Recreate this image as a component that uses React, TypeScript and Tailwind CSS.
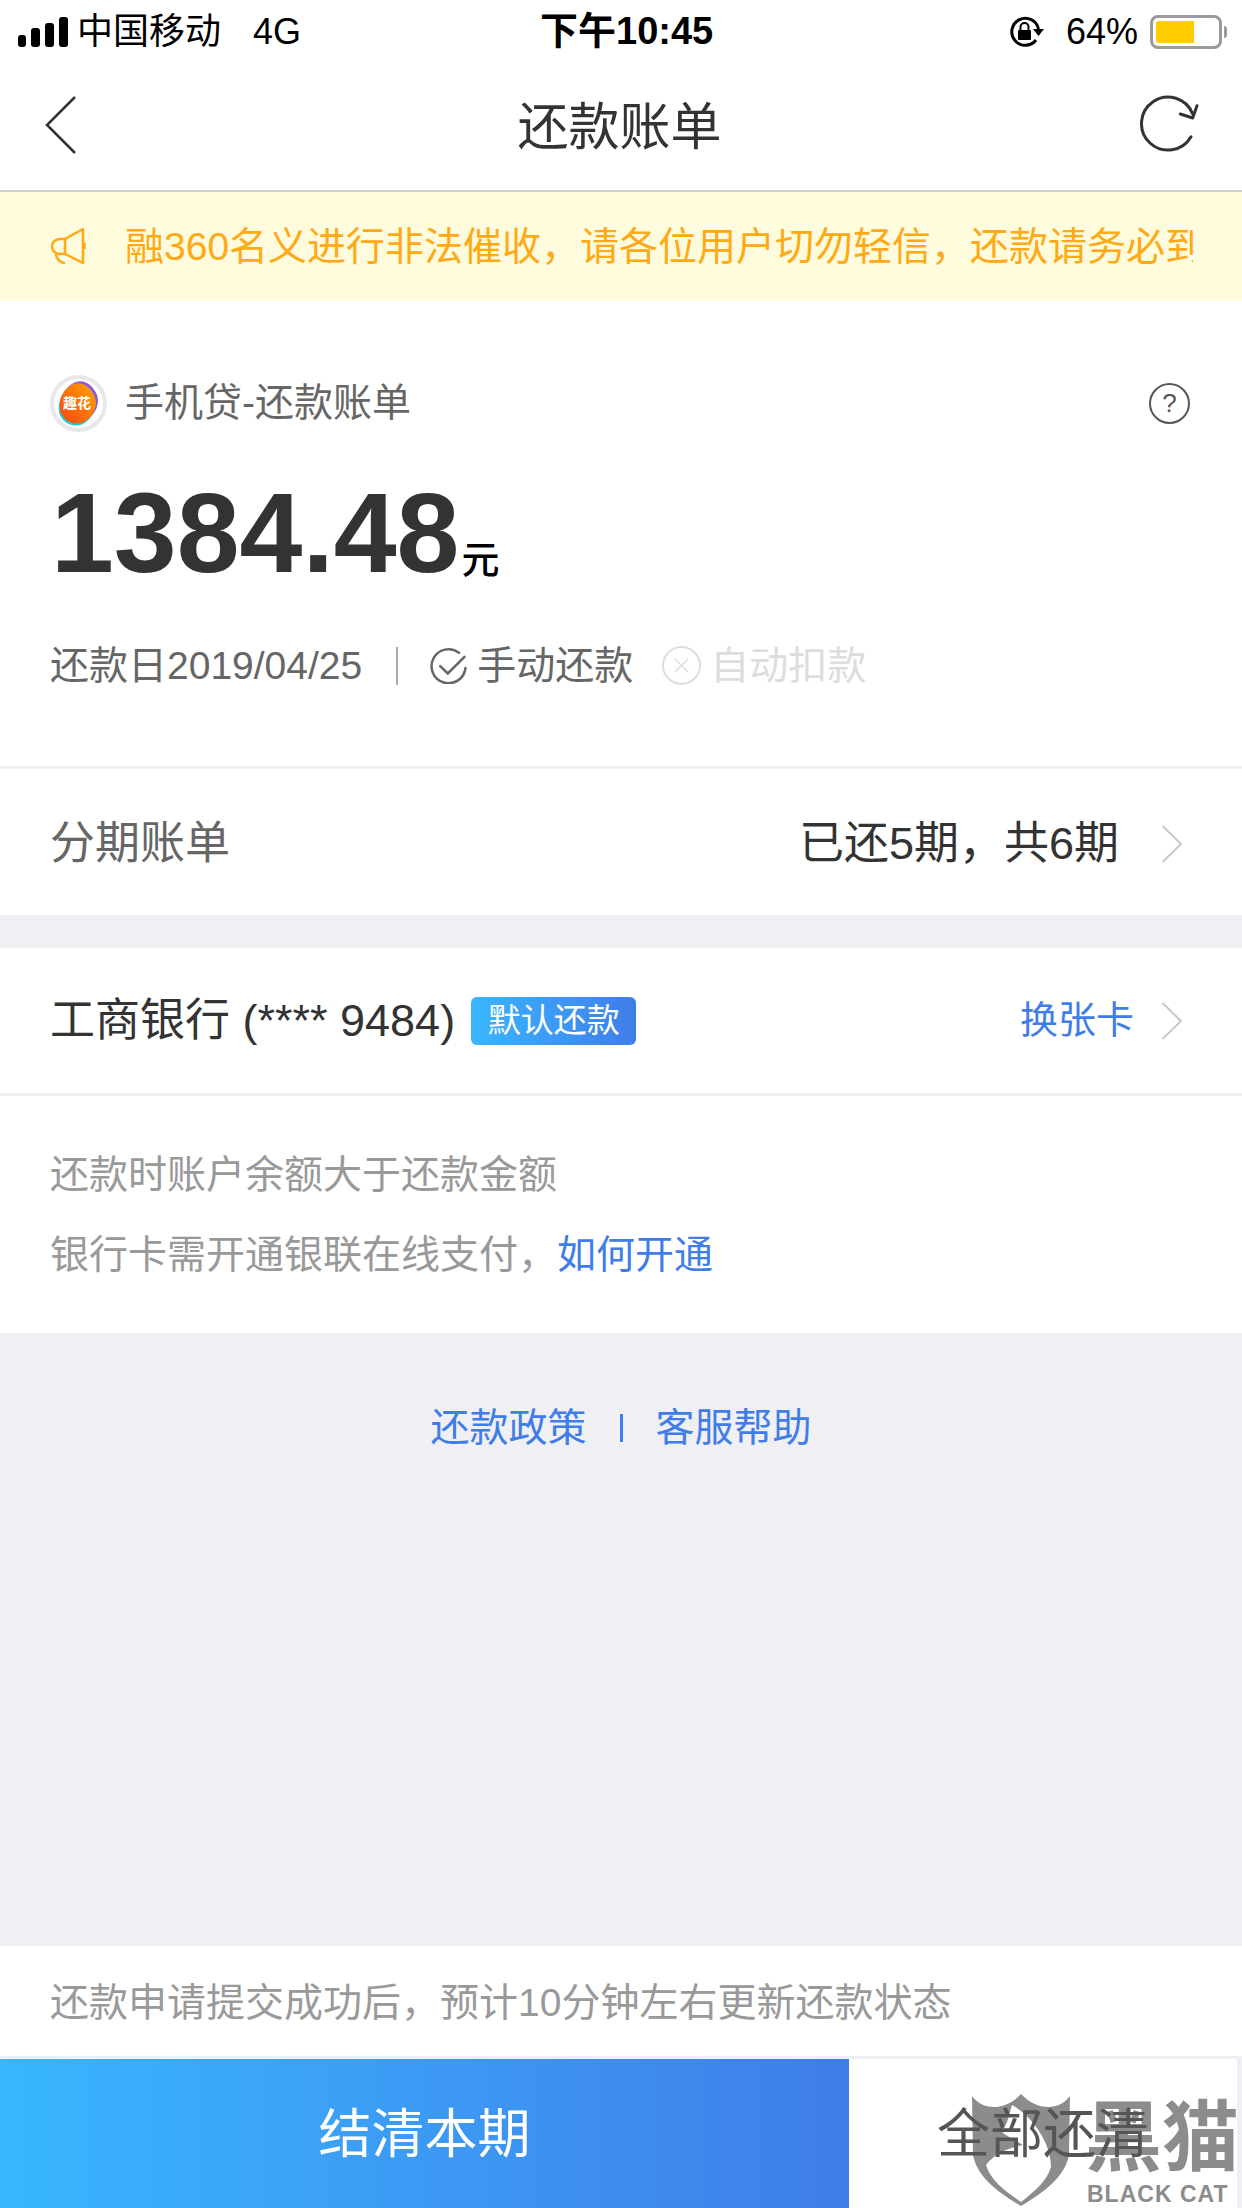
import React from "react";

function Chevron() {
  return (
    <svg width="22" height="38" viewBox="0 0 22 38" fill="none" className="shrink-0">
      <path d="M1.5 1 L20 19 L1.5 37" stroke="#c8c8c8" strokeWidth="2" />
    </svg>
  );
}

function StatusBar() {
  return (
    <div className="flex h-[60px] shrink-0 items-center pt-[3px] text-[36px] text-black">
      <div className="ml-[18px] flex h-[30px] items-end gap-[5px]">
        <div className="h-[12px] w-[8px] rounded-[3px] bg-black" />
        <div className="h-[19px] w-[9px] rounded-[3px] bg-black" />
        <div className="h-[24px] w-[9px] rounded-[3px] bg-black" />
        <div className="h-[30px] w-[9px] rounded-[3px] bg-black" />
      </div>
      <span className="ml-[9px]">中国移动</span>
      <span className="ml-[32px]">4G</span>
      <span className="ml-[239px] text-[38px] font-semibold">下午10:45</span>
      <svg width="36" height="32" viewBox="0 0 36 32" fill="none" className="ml-auto">
        <path d="M27 24 A13.5 13.5 0 1 1 29.5 13" stroke="#000" strokeWidth="3" />
        <path d="M24 13 L35 13 L29.5 20 Z" fill="#000" />
        <rect x="9" y="14" width="13" height="10" rx="1" fill="#000" />
        <path d="M11.5 14 V11 A4 4 0 0 1 19.5 11 V14" stroke="#000" strokeWidth="2" />
      </svg>
      <span className="ml-[21px]">64%</span>
      <div className="ml-[12px] mr-[15px] flex items-center">
        <div className="flex h-[34px] w-[72px] items-center rounded-[8px] border-[3px] border-[#9b9b9b] p-[3px]">
          <div className="h-[22px] w-[38px] rounded-l-[3px] bg-[#ffcc00]" />
        </div>
        <div className="ml-[2px] h-[12px] w-[3px] rounded-r-[3px] bg-[#9b9b9b]" />
      </div>
    </div>
  );
}

function NavBar() {
  return (
    <div className="flex h-[132px] shrink-0 items-center justify-between border-b-2 border-[#d0d0d0] pl-[45px] pr-[44px]">
      <div className="w-[58px]">
        <svg width="32" height="60" viewBox="0 0 32 60" fill="none">
          <path d="M30 2 L2 30 L30 58" stroke="#333" strokeWidth="2.5" />
        </svg>
      </div>
      <span className="pt-[6px] text-[51px] text-[#333]">还款账单</span>
      <svg width="66" height="62" viewBox="0 0 66 62" fill="none" className="-mr-[4px]">
        <path d="M55 42.7 A26.5 26.5 0 1 1 56.7 20" stroke="#333" strokeWidth="3" strokeLinecap="round" />
        <path d="M61 11.7 L56.7 24 L44.3 20" stroke="#333" strokeWidth="3" strokeLinecap="round" strokeLinejoin="round" />
      </svg>
    </div>
  );
}

function Notice() {
  return (
    <div className="flex h-[109px] shrink-0 items-center bg-[#fffbdd] pl-[51px] pr-[49px] text-[39px] text-[#ffa914]">
      <svg width="37" height="37" viewBox="11 12 37 37" fill="none" className="shrink-0">
        <path d="M25 23 L43 13 V47 L25 38 Z" stroke="#ffa914" strokeWidth="2.5" strokeLinejoin="round" />
        <path d="M25 23 H20 A8 7.5 0 0 0 20 38 H25" stroke="#ffa914" strokeWidth="2.5" />
        <path d="M16 39 C17 44 20 46 24 47" stroke="#ffa914" strokeWidth="2.5" strokeLinecap="round" />
        <path d="M44.5 27 V33" stroke="#ffa914" strokeWidth="2.5" />
      </svg>
      <div className="ml-[37px] overflow-hidden whitespace-nowrap pt-[2px]">
        融360名义进行非法催收，请各位用户切勿轻信，还款请务必到
      </div>
    </div>
  );
}

function Logo() {
  return (
    <div className="relative h-[57px] w-[57px] shrink-0 rounded-full border-[4px] border-[#e8e8ea]">
      <svg width="49" height="49" viewBox="4 4 49 49" className="absolute left-0 top-0">
        <defs>
          <linearGradient id="qh" x1="1" y1="0" x2="0" y2="1">
            <stop offset="0" stopColor="#ffa800" />
            <stop offset="1" stopColor="#f9420e" />
          </linearGradient>
        </defs>
        <path d="M24 9 C32 6 41 12 45 22 C48 30 44 42 34 47 C26 51 16 47 12 40 C7 32 10 14 24 9 Z" fill="#8457ee" transform="translate(2,-2)" />
        <path d="M24 9 C32 6 41 12 45 22 C48 30 44 42 34 47 C26 51 16 47 12 40 C7 32 10 14 24 9 Z" fill="#22cdd8" transform="translate(-1,2)" />
        <path d="M24 9 C32 6 41 12 45 22 C48 30 44 42 34 47 C26 51 16 47 12 40 C7 32 10 14 24 9 Z" fill="url(#qh)" />
      </svg>
      <span className="absolute left-[9px] top-[16px] text-[14px] font-bold leading-[16px] whitespace-nowrap text-white">
        趣花
      </span>
    </div>
  );
}

function BillCard() {
  return (
    <div className="h-[465px] shrink-0 pl-[50px] pr-[52px] pt-[73px]">
      <div className="flex items-center">
        <Logo />
        <span className="ml-[18px] text-[39px] text-[#666]">手机贷-还款账单</span>
        <div className="ml-auto flex h-[41px] w-[41px] items-center justify-center rounded-full border-2 border-[#555] text-[26px] text-[#555]">
          ?
        </div>
      </div>
      <div className="mt-[42px] flex h-[116px] items-end pl-[1px]">
        <span className="text-[113px] font-bold leading-[116px] text-[#333]">1384.48</span>
        <span className="mb-[12px] ml-[2px] text-[38px] font-medium leading-[38px] text-black">元</span>
      </div>
      <div className="mt-[46px] flex items-center text-[39px] text-[#666]">
        <span>还款日2019/04/25</span>
        <div className="ml-[34px] h-[38px] w-[2px] bg-[#aaa]" />
        <svg width="37" height="37" viewBox="0 0 37 37" fill="none" className="ml-[32px]">
          <path d="M29 5.8 A17 17 0 1 0 35.5 21" stroke="#666" strokeWidth="2.5" strokeLinecap="round" />
          <path d="M10.2 19.2 L17.8 26.5 L34.5 9.8" stroke="#666" strokeWidth="2.5" strokeLinecap="round" />
        </svg>
        <span className="ml-[10px]">手动还款</span>
        <div className="ml-[29px] flex h-[39px] w-[39px] items-center justify-center rounded-full border-2 border-[#ddd]">
          <svg width="15" height="15" viewBox="0 0 15 15" fill="none">
            <path d="M1 1 L14 14 M14 1 L1 14" stroke="#ddd" strokeWidth="1.5" />
          </svg>
        </div>
        <span className="ml-[9px] text-[#ddd]">自动扣款</span>
      </div>
    </div>
  );
}

export default function App() {
  return (
    <div className="flex h-[2208px] w-[1242px] flex-col overflow-hidden bg-[#efeff4] [font-family:'Liberation_Sans','Noto_Sans_CJK_SC',sans-serif]">
      <div className="bg-white">
        <StatusBar />
        <NavBar />
      </div>
      <Notice />
      <div className="bg-white">
        <BillCard />
      </div>

      {/* 分期账单 */}
      <div className="mt-[3px] flex h-[146px] shrink-0 items-center bg-white pl-[50px] pr-[59px] pt-[3px]">
        <span className="text-[45px] text-[#666]">分期账单</span>
        <span className="ml-auto text-[45px] text-[#333]">已还5期，共6期</span>
        <div className="ml-[42px]">
          <Chevron />
        </div>
      </div>

      {/* 银行卡 */}
      <div className="mt-[33px] flex h-[145px] shrink-0 items-center bg-white pl-[50px] pr-[59px]">
        <span className="text-[45px] text-[#333]">工商银行 (**** 9484)</span>
        <span className="ml-[16px] flex h-[48px] w-[165px] items-center justify-center rounded-[6px] bg-gradient-to-r from-[#38b6ff] to-[#3f7de8] text-[33px] text-white">
          默认还款
        </span>
        <span className="ml-auto text-[38px] text-[#3f7de8]">换张卡</span>
        <div className="ml-[27px]">
          <Chevron />
        </div>
      </div>

      <div className="mt-[3px] flex h-[237px] shrink-0 flex-col bg-white pl-[50px] pt-[58px] text-[39px] text-[#999]">
        <div className="leading-[42px]">还款时账户余额大于还款金额</div>
        <div className="mt-[38px] leading-[42px]">
          银行卡需开通银联在线支付，<span className="text-[#3f7de8]">如何开通</span>
        </div>
      </div>

      <div className="flex-1 pt-[71px]">
        <div className="flex items-center justify-center text-[39px] leading-[48px] text-[#3f7de8]">
          <span>还款政策</span>
          <div className="mx-[33px] h-[28px] w-[3px] bg-[#3f7de8]" />
          <span>客服帮助</span>
        </div>
      </div>

      <div className="flex h-[110px] shrink-0 items-center bg-white pl-[50px] pt-[5px] text-[39px] text-[#999]">
        还款申请提交成功后，预计10分钟左右更新还款状态
      </div>

      <div className="mt-[3px] flex h-[149px] shrink-0">
        <div className="flex w-[849px] items-center justify-center bg-gradient-to-r from-[#38b6ff] to-[#3f7de8] pt-[2px] text-[53px] text-white">
          结清本期
        </div>
        <div className="relative flex w-[388px] items-center justify-center bg-white pt-[2px]">
          {/* 水印 */}
          <svg width="100" height="114" viewBox="0 0 100 114" className="absolute left-[122px] top-[34px]">
            <path
              d="M1 3 C12 18 34 18 50 1 C66 18 88 18 99 3 L98 62 C94 84 72 100 50 113 C28 100 6 84 2 62 Z"
              fill="#8c8c8c"
            />
            <path
              d="M41 12 C62 24 80 50 80 74 C76 88 64 98 50 109 C34 98 20 88 15 72 C24 60 40 54 52 52 C46 48 36 44 30 38 C36 34 38 22 41 12 Z"
              fill="#fff"
            />
          </svg>
          <div className="absolute left-[236px] top-[34px] whitespace-nowrap text-[77px] font-bold leading-[90px] text-[#8c8c8c]">
            黑猫
          </div>
          <div className="absolute left-[238px] top-[122px] whitespace-nowrap text-[23px] font-bold leading-[26px] tracking-[1px] text-[#8c8c8c]">
            BLACK CAT
          </div>
          <span className="relative text-[53px] text-[#555]">全部还清</span>
        </div>
        <div className="flex-1 bg-[#efeff4]" />
      </div>
    </div>
  );
}
